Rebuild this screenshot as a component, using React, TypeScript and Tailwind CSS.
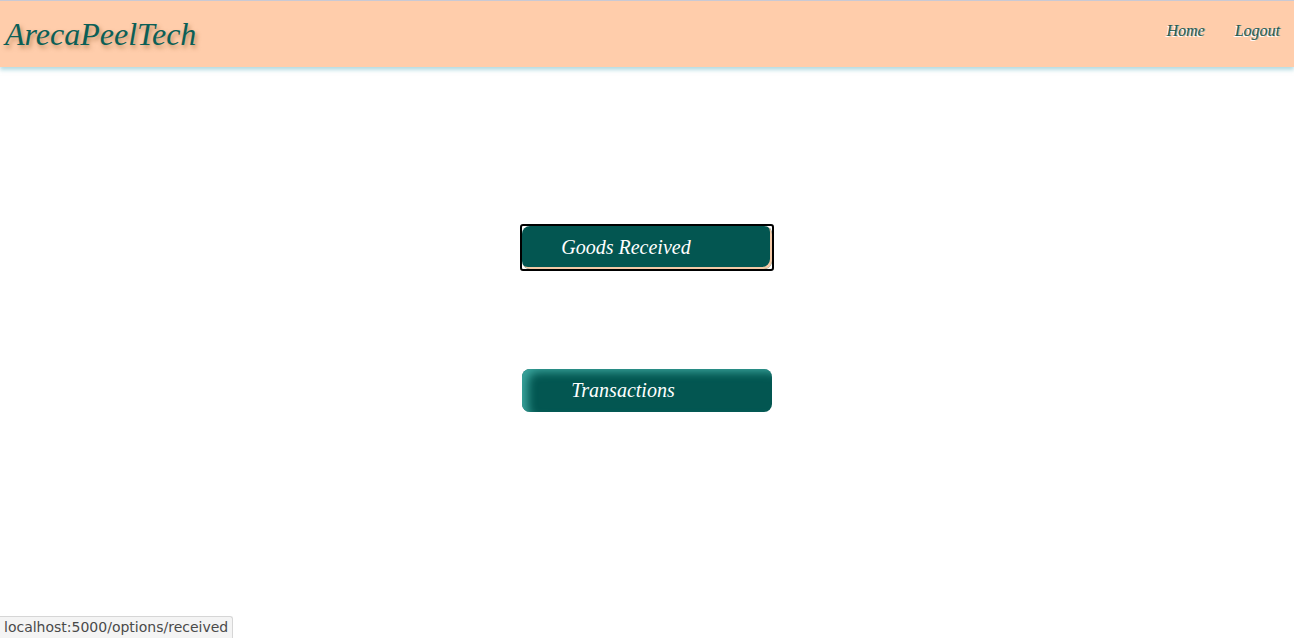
import React from "react";

const serif = "font-['Liberation_Serif','Times_New_Roman',serif]";

const NavBar = () => (
  <header className="flex h-[67px] items-center justify-between border-t border-[#c9c9d4] bg-[#ffcdab] pl-[5px] pr-[14px] shadow-[0_3px_4px_rgba(120,190,200,0.55)]">
    <h1
      className={`${serif} text-[32px] italic leading-none text-[#0b5f57] [text-shadow:2px_3px_4px_rgba(140,90,40,0.55)]`}
    >
      ArecaPeelTech
    </h1>
    <nav className={`${serif} flex items-center gap-[30px] pb-[6px] text-[16px] italic text-[#245c56]`}>
      <a href="#" className="[text-shadow:-1px_1px_0_#ffffff,1px_0_0_rgba(36,92,86,0.35)]">
        Home
      </a>
      <a href="#" className="[text-shadow:-1px_1px_0_#ffffff,1px_0_0_rgba(36,92,86,0.35)]">
        Logout
      </a>
    </nav>
  </header>
);

const OptionButton = ({ label, focused }: { label: string; focused?: boolean }) => {
  const inner = (
    <button
      className={`${serif} flex h-[43px] w-[250px] items-center justify-center rounded-[8px] bg-[#035651] text-[20px] italic leading-none text-white ${
        focused
          ? "pr-[42px] pb-[1px] shadow-[inset_-2px_-2px_0_#f3c9a6]"
          : "pr-[48px] pb-[2px] shadow-[inset_8px_5px_10px_-2px_#3aa49c]"
      }`}
    >
      {label}
    </button>
  );
  if (!focused) return inner;
  return <div className="rounded-[3px] border-2 border-black bg-white">{inner}</div>;
};

export default function App() {
  return (
    <div className="relative h-[638px] w-full overflow-hidden bg-white">
      <NavBar />
      <main className="flex flex-col items-center pt-[157px]">
        <div className="flex flex-col items-center gap-[98px]">
          <OptionButton label="Goods Received" focused />
          <OptionButton label="Transactions" />
        </div>
      </main>
      <div className="absolute bottom-0 left-0 rounded-tr-[3px] border-t border-r border-[#d6d6d6] bg-[#f4f4f4] px-[4px] pb-[1px] font-['DejaVu_Sans','Noto_Sans',sans-serif] text-[14px] leading-[20px] text-[#4a4a4a]">
        localhost:5000/options/received
      </div>
    </div>
  );
}
